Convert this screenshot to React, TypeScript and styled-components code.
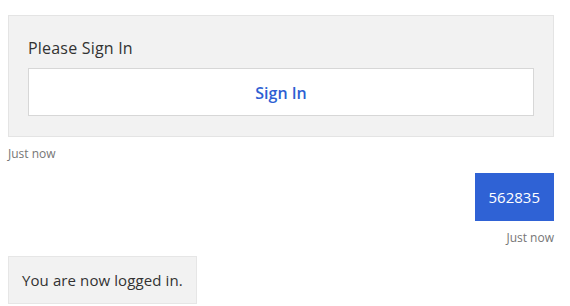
import React from "react";
import styled, { createGlobalStyle } from "styled-components";

const GlobalStyle = createGlobalStyle`
  html, body { margin: 0; padding: 0; background: #ffffff; }
  body { font-family: "Open Sans", "Noto Sans", sans-serif; width: 570px; height: 306px; overflow: hidden; }
`;

const Transcript = styled.div`
  display: flex;
  flex-direction: column;
  padding: 15px 16px 0 8px;
`;

const Activity = styled.div<{ $fromUser?: boolean; $gap: number }>`
  display: flex;
  flex-direction: column;
  align-items: ${(p) => (p.$fromUser ? "flex-end" : "flex-start")};
  margin-bottom: ${(p) => p.$gap}px;
`;

const Card = styled.div`
  align-self: stretch;
  background: #f2f2f2;
  border: 1px solid #e4e4e4;
  padding: 20px 19px 20px 19px;
  display: flex;
  flex-direction: column;
  gap: 8px;
`;

const CardTitle = styled.div`
  font-size: 16px;
  letter-spacing: 0.2px;
  color: #323232;
  line-height: 24px;
`;

const SignInButton = styled.button`
  height: 48px;
  padding: 2px 0 0;
  background: #ffffff;
  border: 1px solid #d7d7d7;
  color: #2e5fd3;
  font-family: inherit;
  font-size: 16px;
  font-weight: 600;
  cursor: pointer;
`;

const Timestamp = styled.div`
  font-size: 12px;
  color: #767676;
  margin-top: 9px;
  line-height: 15px;
`;

const Bubble = styled.div<{ $fromUser?: boolean }>`
  background: ${(p) => (p.$fromUser ? "#2f62d5" : "#f2f2f2")};
  border: 1px solid ${(p) => (p.$fromUser ? "#2f62d5" : "#e6e6e6")};
  color: ${(p) => (p.$fromUser ? "#ffffff" : "#323232")};
  font-size: 15px;
  letter-spacing: ${(p) => (p.$fromUser ? "0" : "0.1px")};
  line-height: 20px;
  padding: 13px;
`;

export default function App() {
  return (
    <>
      <GlobalStyle />
      <Transcript>
        <Activity $gap={12}>
          <Card>
            <CardTitle>Please Sign In</CardTitle>
            <SignInButton>Sign In</SignInButton>
          </Card>
          <Timestamp>Just now</Timestamp>
        </Activity>
        <Activity $fromUser $gap={11}>
          <Bubble $fromUser>562835</Bubble>
          <Timestamp>Just now</Timestamp>
        </Activity>
        <Activity $gap={0}>
          <Bubble>You are now logged in.</Bubble>
        </Activity>
      </Transcript>
    </>
  );
}
